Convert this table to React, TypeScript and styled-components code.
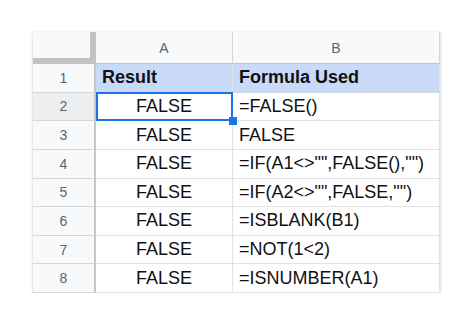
import React from "react";
import styled, { createGlobalStyle, css } from "styled-components";

const Global = createGlobalStyle`
  html, body { margin: 0; padding: 0; background: #ffffff; }
  body { font-family: "Liberation Sans", Arial, sans-serif; }
`;

const Page = styled.div`
  padding: 32px 0 0 33px;
`;

const Sheet = styled.div`
  display: grid;
  grid-template-columns: 63px 137px 207px;
  grid-template-rows: 32px repeat(8, 28.625px);
  width: 407px;
  box-shadow: 0 1px 3px rgba(0, 0, 0, 0.18), 0 0 1px rgba(0, 0, 0, 0.15);
  background: #ffffff;
`;

const Corner = styled.div`
  box-sizing: border-box;
  background: #f8f9fa;
  border-right: 6px solid #c3c3c3;
  border-bottom: 6px solid #c3c3c3;
`;

const ColHead = styled.div`
  box-sizing: border-box;
  background: #f8f9fa;
  border-right: 1px solid #d6d6d6;
  border-bottom: 1px solid #c3c3c3;
  display: flex;
  align-items: center;
  justify-content: center;
  font-size: 14px;
  color: #5f6368;
`;

const RowHead = styled.div<{ $active?: boolean }>`
  box-sizing: border-box;
  background: ${(p) => (p.$active ? "#eceef0" : "#f8f9fa")};
  border-right: 2px solid #c6c6c6;
  border-bottom: 1px solid #d6d6d6;
  display: flex;
  align-items: center;
  justify-content: center;
  font-size: 14px;
  color: #5f6368;
`;

const Cell = styled.div<{ $head?: boolean; $center?: boolean }>`
  position: relative;
  box-sizing: border-box;
  border-right: 1px solid #e2e2e2;
  border-bottom: 1px solid #e2e2e2;
  display: flex;
  align-items: center;
  justify-content: ${(p) => (p.$center ? "center" : "flex-start")};
  padding: 0 6px;
  font-size: 18px;
  color: #111111;
  white-space: nowrap;
  ${(p) =>
    p.$head &&
    css`
      background: #c9daf8;
      font-weight: bold;
      border-bottom-color: #d0d8e4;
    `}
`;

const Selection = styled.div`
  position: absolute;
  z-index: 2;
  top: -1px;
  left: 0;
  right: -1px;
  bottom: -1px;
  border: 2px solid #1a73e8;
  pointer-events: none;
`;

const Handle = styled.div`
  position: absolute;
  right: -6px;
  bottom: -6px;
  width: 8px;
  height: 8px;
  background: #1a73e8;
`;

const rows: [string, string][] = [
  ["FALSE", "=FALSE()"],
  ["FALSE", "FALSE"],
  ["FALSE", '=IF(A1<>"",FALSE(),"")'],
  ["FALSE", '=IF(A2<>"",FALSE,"")'],
  ["FALSE", "=ISBLANK(B1)"],
  ["FALSE", "=NOT(1<2)"],
  ["FALSE", "=ISNUMBER(A1)"],
];

export default function App() {
  return (
    <>
      <Global />
      <Page>
        <Sheet>
          <Corner />
          <ColHead>A</ColHead>
          <ColHead>B</ColHead>

          <RowHead>1</RowHead>
          <Cell $head>Result</Cell>
          <Cell $head>Formula Used</Cell>

          {rows.map(([a, b], i) => (
            <React.Fragment key={i}>
              <RowHead $active={i === 0}>{i + 2}</RowHead>
              <Cell $center>
                {a}
                {i === 0 && (
                  <Selection>
                    <Handle />
                  </Selection>
                )}
              </Cell>
              <Cell>{b}</Cell>
            </React.Fragment>
          ))}
        </Sheet>
      </Page>
    </>
  );
}
